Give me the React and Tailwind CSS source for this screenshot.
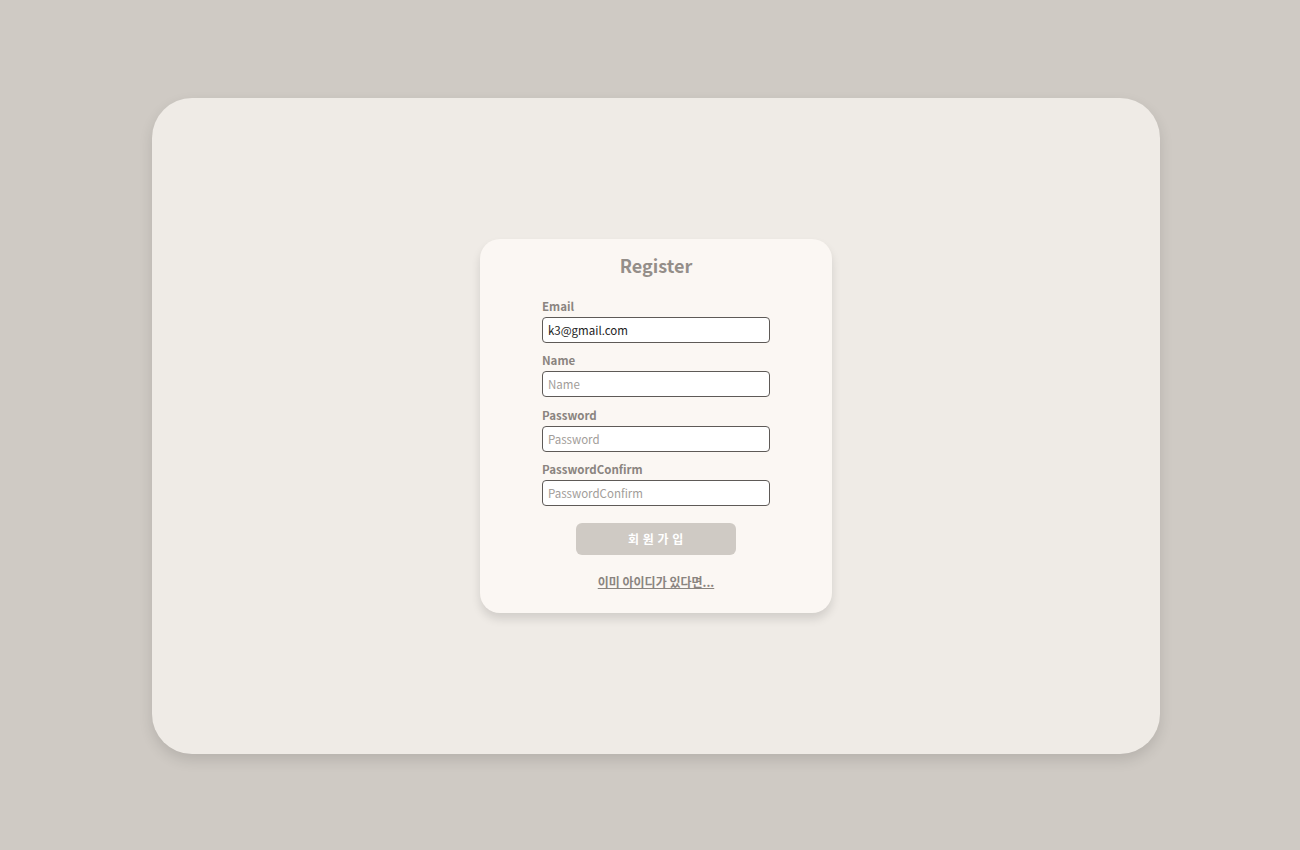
const fields = [
  { label: "Email", value: "k3@gmail.com", type: "text" },
  { label: "Name", value: "", type: "text" },
  { label: "Password", value: "", type: "password" },
  { label: "PasswordConfirm", value: "", type: "password" },
];

const Field = ({ label, value, type }) => {
  return (
    <div className="flex flex-col gap-[3px]">
      <label className="text-[11.5px] font-bold leading-[16px] text-[#8a847f]">{label}</label>
      <input
        type={type}
        defaultValue={value}
        placeholder={label}
        className="w-[228px] h-[26px] rounded-[4px] border border-[#5e5a57] bg-white px-[5px] text-[11.5px] text-[#222] placeholder:text-[#a29d99] outline-none"
      />
    </div>
  );
};

export default function App() {
  return (
    <div
      className="min-h-[850px] w-full bg-[#cfcac4] pl-[152px] pt-[98px]"
      style={{ fontFamily: '"Noto Sans CJK KR", "Noto Sans", sans-serif' }}
    >
      <div className="w-[1008px] h-[656px] rounded-[40px] bg-[#efebe6] shadow-[0_6px_14px_rgba(0,0,0,0.12)] flex items-center justify-center">
        <div className="w-[352px] h-[374px] rounded-[20px] bg-[#fbf7f3] shadow-[0_6px_10px_rgba(0,0,0,0.12)] flex flex-col items-center pt-[13px]">
          <h1 className="text-[18px] font-bold leading-[26px] text-[#948e89]">Register</h1>
          <form className="mt-[20px] flex flex-col gap-[9.4px]">
            {fields.map((f) => (
              <Field key={f.label} {...f} />
            ))}
          </form>
          <button className="mt-[17px] w-[160px] h-[32px] rounded-[6px] bg-[#cfcac4] text-[12px] font-bold text-white tracking-[0.5px]">
            회 원 가 입
          </button>
          <a href="#" className="mt-[18px] text-[12px] font-bold text-[#8a847f] underline">
            이미 아이디가 있다면...
          </a>
        </div>
      </div>
    </div>
  );
}
